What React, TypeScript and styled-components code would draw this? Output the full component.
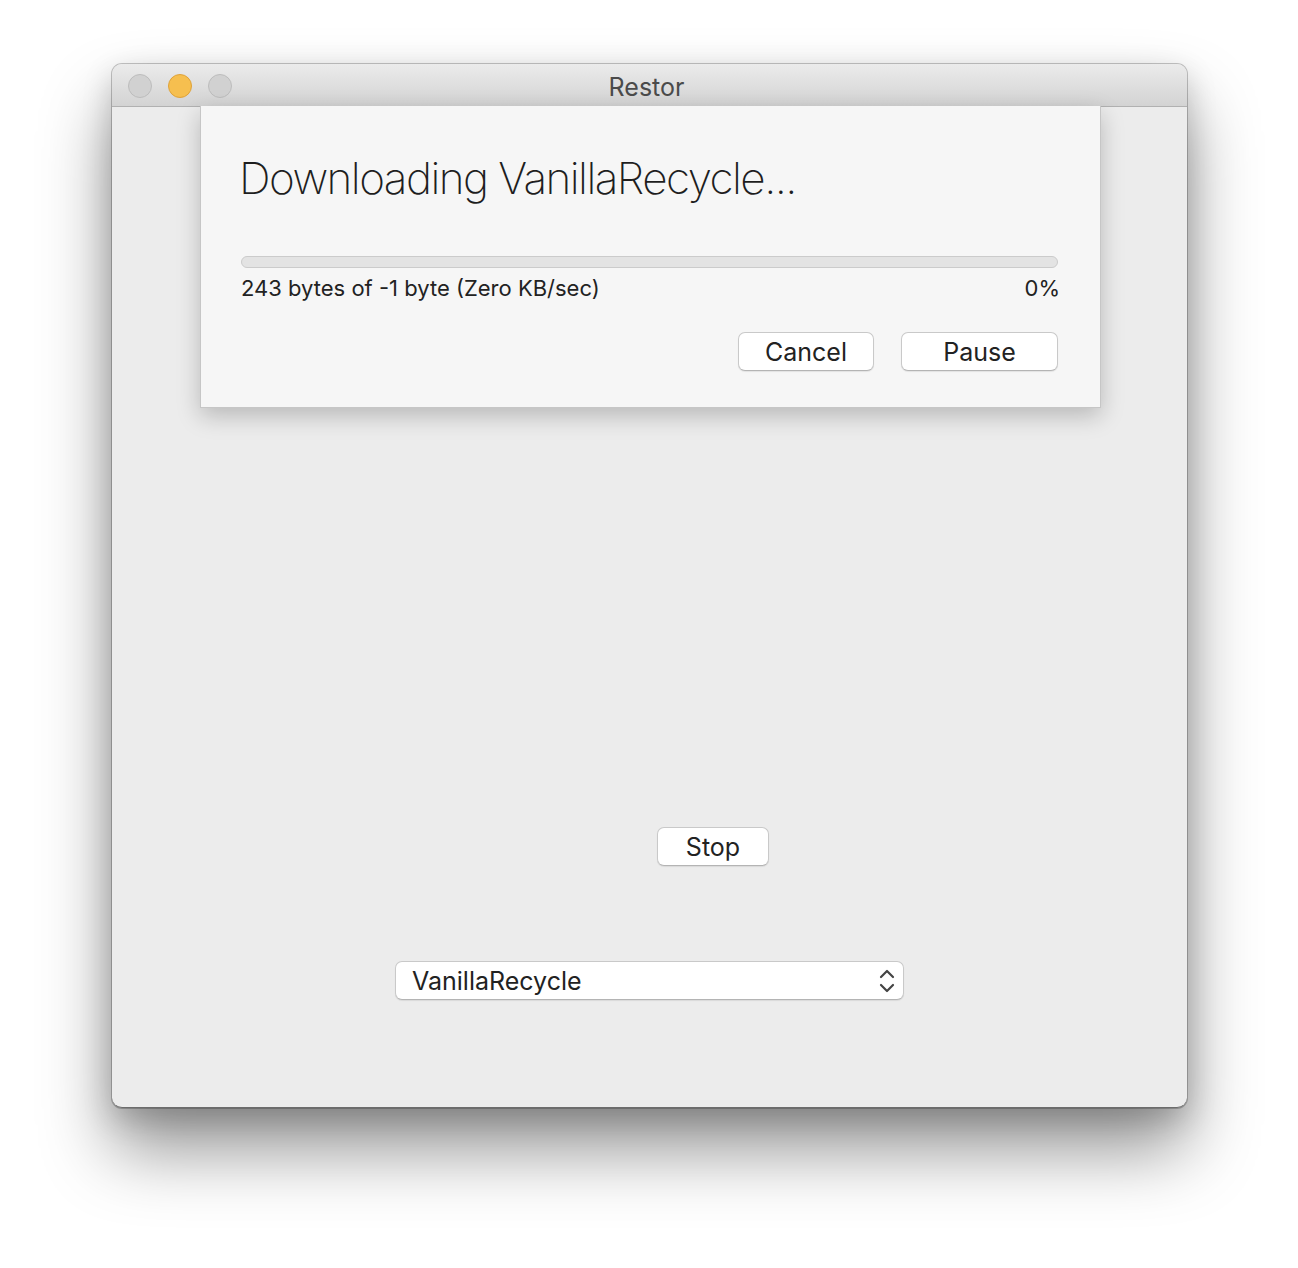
import * as React from "react";
import styled, {createGlobalStyle} from 'styled-components';

const Global = createGlobalStyle`
  html, body {
    margin: 0;
    padding: 0;
    background: #ffffff;
    font-family: Inter, "Liberation Sans", sans-serif;
  }
`

const Page = styled.div`
  width: 1298px;
  height: 1268px;
  padding: 64px 0 0 112px;
  box-sizing: border-box;
`

const Window = styled.div`
  width: 1075px;
  height: 1044px;
  border-radius: 10px;
  overflow: hidden;
  display: flex;
  flex-direction: column;
  background: #ececec;
  box-shadow: 0 0 0 1px rgba(0,0,0,0.22), 0 42px 70px rgba(0,0,0,0.42), 0 10px 30px rgba(0,0,0,0.18);
  border-bottom: 1px solid #6c6c6c;
  box-sizing: border-box;
`

const TitleBar = styled.div`
  height: 43px;
  flex: none;
  position: relative;
  display: flex;
  align-items: center;
  justify-content: center;
  background: linear-gradient(#ebebeb, #d3d3d3);
  border-bottom: 1px solid #b1b1b1;
  box-sizing: border-box;
`

const Lights = styled.div`
  position: absolute;
  left: 16px;
  top: 10px;
  display: flex;
  gap: 16px;
`

const Light = styled.div<{$on?: boolean}>`
  width: 24px;
  height: 24px;
  border-radius: 50%;
  box-sizing: border-box;
  background: ${p => p.$on ? '#f6bf4f' : '#d1d1d1'};
  border: 1px solid ${p => p.$on ? '#dea23a' : '#bcbcbc'};
`

const Title = styled.div`
  font-size: 25px;
  color: #4b4b4b;
  margin-left: -6px;
  margin-top: 3px;
`

const Content = styled.div`
  flex: 1;
  position: relative;
  display: flex;
  flex-direction: column;
  align-items: center;
  padding-top: 720px;
  box-sizing: border-box;
`

const Sheet = styled.div`
  position: absolute;
  top: -1px;
  left: 88px;
  width: 901px;
  height: 302px;
  box-sizing: border-box;
  background: #f6f6f6;
  border: 1px solid #c6c6c6;
  border-top: none;
  box-shadow: 0 8px 22px rgba(0,0,0,0.22);
  padding: 44px 41px 0 40px;
  display: flex;
  flex-direction: column;
`

const Heading = styled.div`
  font-size: 44px;
  font-weight: 200;
  color: #1e1e1e;
  letter-spacing: -1.55px;
  line-height: 56px;
  margin-left: -2px;
`

const Track = styled.div`
  margin-top: 50px;
  height: 12px;
  width: 817px;
  border-radius: 6px;
  background: #e3e3e3;
  border: 1px solid #cbcbcb;
  box-sizing: border-box;
`

const StatusRow = styled.div`
  display: flex;
  justify-content: space-between;
  width: 819px;
  margin-top: 5px;
  font-size: 22px;
  line-height: 30px;
  color: #222;
`

const Actions = styled.div`
  display: flex;
  justify-content: flex-end;
  gap: 27px;
  width: 817px;
  margin-top: 29px;
`

const Button = styled.div<{$w: number}>`
  width: ${p => p.$w}px;
  height: 39px;
  box-sizing: border-box;
  background: #ffffff;
  border: 1px solid #c9c9c9;
  border-bottom-color: #b4b4b4;
  border-radius: 7px;
  box-shadow: 0 1px 1px rgba(0,0,0,0.08);
  display: flex;
  align-items: center;
  justify-content: center;
  font-size: 25px;
  color: #222;
`

const StopButton = styled(Button)`
  align-self: flex-start;
  margin-left: 545px;
`

const Popup = styled.div`
  margin-top: 95px;
  width: 509px;
  height: 39px;
  box-sizing: border-box;
  background: #ffffff;
  border: 1px solid #c9c9c9;
  border-bottom-color: #b4b4b4;
  border-radius: 7px;
  box-shadow: 0 1px 1px rgba(0,0,0,0.08);
  display: flex;
  align-items: center;
  justify-content: space-between;
  padding: 0 8px 0 16px;
  font-size: 25px;
  color: #222;
`

const Chevrons = () => (
    <svg width="16" height="26" viewBox="0 0 16 26">
        <path d="M2 9 L8 3 L14 9" fill="none" stroke="#444" strokeWidth="2.2" strokeLinecap="round" strokeLinejoin="round"/>
        <path d="M2 17 L8 23 L14 17" fill="none" stroke="#444" strokeWidth="2.2" strokeLinecap="round" strokeLinejoin="round"/>
    </svg>
)

const App = () => {
    return (
        <Page>
            <Global/>
            <Window>
                <TitleBar>
                    <Lights>
                        <Light/>
                        <Light $on/>
                        <Light/>
                    </Lights>
                    <Title>Restor</Title>
                </TitleBar>
                <Content>
                    <Sheet>
                        <Heading>Downloading VanillaRecycle...</Heading>
                        <Track/>
                        <StatusRow>
                            <span>243 bytes of -1 byte (Zero KB/sec)</span>
                            <span>0%</span>
                        </StatusRow>
                        <Actions>
                            <Button $w={136}>Cancel</Button>
                            <Button $w={157}>Pause</Button>
                        </Actions>
                    </Sheet>
                    <StopButton $w={112}>Stop</StopButton>
                    <Popup>
                        <span>VanillaRecycle</span>
                        <Chevrons/>
                    </Popup>
                </Content>
            </Window>
        </Page>
    )
}

export default App;
